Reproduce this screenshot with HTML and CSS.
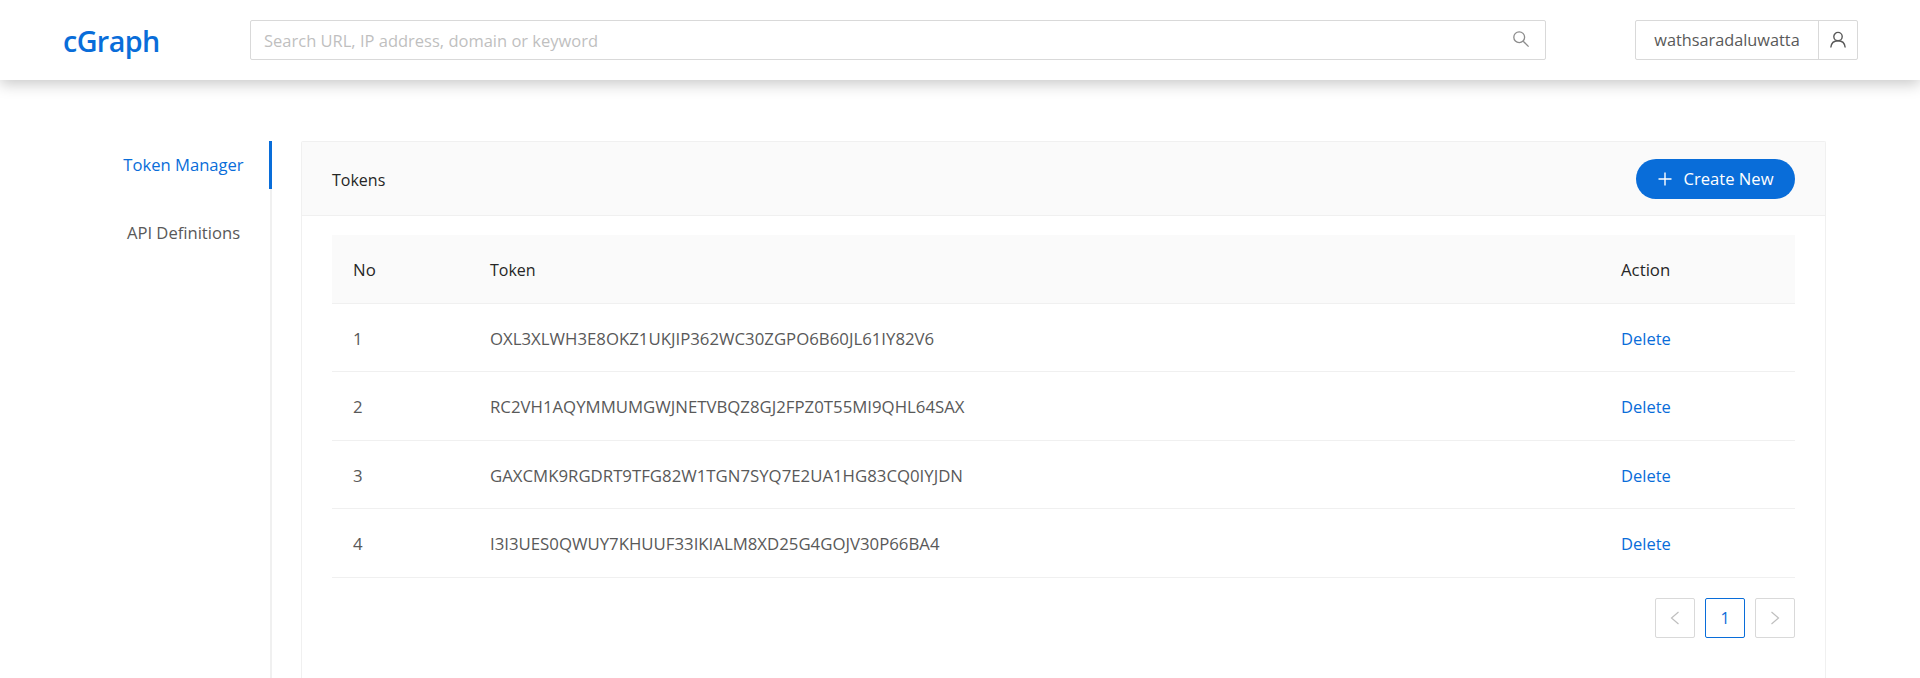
FILE: index.html
```html
<!DOCTYPE html>
<html lang="en">
<head>
<meta charset="utf-8">
<title>cGraph</title>
<link rel="stylesheet" href="styles.css">
</head>
<body>
<header class="topbar">
  <div class="logo">cGraph</div>
  <div class="search">
    <span class="search-text">Search URL, IP address, domain or keyword</span>
    <svg class="search-icon" viewBox="0 0 18 18" width="18" height="18"><circle cx="7.2" cy="7.2" r="5.4"/><path d="M11.2 11.2 L16.6 16.6"/></svg>
  </div>
  <div class="user">
    <span class="user-name">wathsaradaluwatta</span>
    <span class="user-icon"><svg viewBox="0 0 18 18" width="18" height="18"><circle cx="9" cy="5.6" r="4.2"/><path d="M1.8 16.5 C2.2 12.4 5 9.8 9 9.8 C13 9.8 15.8 12.4 16.2 16.5"/></svg></span>
  </div>
</header>
<main class="main">
  <nav class="side">
    <a class="side-item active">Token Manager</a>
    <a class="side-item">API Definitions</a>
  </nav>
  <section class="card">
    <div class="card-head">
      <span class="card-title">Tokens</span>
      <button class="btn"><svg viewBox="0 0 14 14" width="14" height="14"><path d="M7 0.5V13.5M0.5 7H13.5"/></svg><span>Create New</span></button>
    </div>
    <div class="card-body">
      <table class="table">
        <thead><tr><th class="c-no">No</th><th class="c-token">Token</th><th class="c-act">Action</th></tr></thead>
        <tbody>
          <tr><td class="c-no">1</td><td>OXL3XLWH3E8OKZ1UKJIP362WC30ZGPO6B60JL61IY82V6</td><td class="c-act"><a class="link">Delete</a></td></tr>
          <tr><td class="c-no">2</td><td>RC2VH1AQYMMUMGWJNETVBQZ8GJ2FPZ0T55MI9QHL64SAX</td><td class="c-act"><a class="link">Delete</a></td></tr>
          <tr><td class="c-no">3</td><td>GAXCMK9RGDRT9TFG82W1TGN7SYQ7E2UA1HG83CQ0IYJDN</td><td class="c-act"><a class="link">Delete</a></td></tr>
          <tr><td class="c-no">4</td><td>I3I3UES0QWUY7KHUUF33IKIALM8XD25G4GOJV30P66BA4</td><td class="c-act"><a class="link">Delete</a></td></tr>
        </tbody>
      </table>
      <div class="pager">
        <span class="page"><svg viewBox="0 0 10 14" width="10" height="14"><path d="M8.5 1 L1.5 7 L8.5 13"/></svg></span>
        <span class="page current">1</span>
        <span class="page"><svg viewBox="0 0 10 14" width="10" height="14"><path d="M1.5 1 L8.5 7 L1.5 13"/></svg></span>
      </div>
    </div>
  </section>
</main>
</body>
</html>
```
FILE: styles.css
```css
* { box-sizing: border-box; }
html, body { height: 100%; }
body {
  margin: 0;
  background: #fff;
  color: #595959;
  font-family: "Open Sans", "Noto Sans", sans-serif;
  font-size: 16px;
  overflow: hidden;
  display: flex;
  flex-direction: column;
}
.topbar {
  flex: none;
  height: 80px;
  display: flex;
  align-items: center;
  padding: 0 0 0 63px;
  background: #fff;
  box-shadow: 0 4px 14px rgba(0, 0, 0, 0.22);
  position: relative;
}
.logo {
  flex: none;
  width: 187px;
  color: #096dd9;
  font-size: 28.7px;
  font-weight: 600;
  letter-spacing: -0.6px;
}
.search {
  flex: none;
  width: 1296px;
  height: 40px;
  display: flex;
  align-items: center;
  justify-content: space-between;
  padding: 0 15px 0 13px;
  border: 1px solid #d9d9d9;
  border-radius: 2px;
}
.search-text { color: #bfbfbf; font-size: 16.5px; padding-top: 1px; }
.search-icon { fill: none; stroke: #8c8c8c; stroke-width: 1.3; margin-top: -2px; }
.user {
  flex: none;
  margin-left: 89px;
  width: 223px;
  height: 40px;
  display: flex;
  border: 1px solid #d9d9d9;
  border-radius: 2px;
}
.user-name {
  flex: 1;
  display: flex;
  align-items: center;
  justify-content: center;
  font-size: 16.3px;
}
.user-icon {
  width: 39px;
  display: flex;
  align-items: center;
  justify-content: center;
  border-left: 1px solid #d9d9d9;
}
.user-icon svg { fill: none; stroke: #595959; stroke-width: 1.4; }
.main {
  flex: 1;
  display: flex;
  min-height: 0;
  padding: 61px 94px 0 95px;
  gap: 29px;
}
.side {
  width: 177px;
  border-right: 2px solid #f0f0f0;
  display: flex;
  flex-direction: column;
  gap: 20px;
}
.side-item {
  height: 48px;
  display: flex;
  align-items: center;
  justify-content: center;
  font-size: 16.6px;
  padding-bottom: 1px;
  margin-right: -2px;
}
.side-item.active {
  color: #096dd9;
  border-right: 3px solid #096dd9;
  padding-left: 3px;
}
.card {
  flex: 1;
  border: 1px solid #f0f0f0;
  border-bottom: 0;
  border-radius: 2px 2px 0 0;
}
.card-head {
  height: 74px;
  display: flex;
  align-items: center;
  justify-content: space-between;
  padding: 0 30px;
  background: #fafafa;
  border-bottom: 1px solid #f0f0f0;
}
.card-title { color: #262626; font-size: 16px; padding-top: 2px; }
.btn {
  width: 159px;
  height: 40px;
  display: flex;
  align-items: center;
  justify-content: center;
  gap: 12px;
  border: 0;
  border-radius: 20px;
  background: #096dd9;
  color: #fff;
  font: inherit;
  font-size: 16.6px;
}
.btn svg { fill: none; stroke: #fff; stroke-width: 1.4; }
.card-body { padding: 19px 30px 0; }
.table { width: 100%; border-collapse: collapse; }
.table th {
  height: 68px;
  text-align: left;
  font-weight: 400;
  font-size: 16.8px;
  color: #262626;
  background: #fafafa;
  border-bottom: 1px solid #f0f0f0;
  padding: 1px 0 0;
}
.table th.c-token { font-size: 16px; padding-top: 2px; }
.table td {
  height: 68.5px;
  padding: 2px 0 0;
  font-size: 16.8px;
  border-bottom: 1px solid #f0f0f0;
}
.c-no { width: 158px; padding-left: 21px !important; }
.c-act { width: 174px; }
.link { color: #096dd9; font-size: 16.5px; }
.pager {
  display: flex;
  justify-content: flex-end;
  gap: 10px;
  margin-top: 20px;
}
.page {
  width: 40px;
  height: 40px;
  display: flex;
  align-items: center;
  justify-content: center;
  border: 1px solid #d9d9d9;
  border-radius: 2px;
}
.page svg { fill: none; stroke: #bfbfbf; stroke-width: 1.2; }
.page.current { border-color: #096dd9; color: #096dd9; }
```
